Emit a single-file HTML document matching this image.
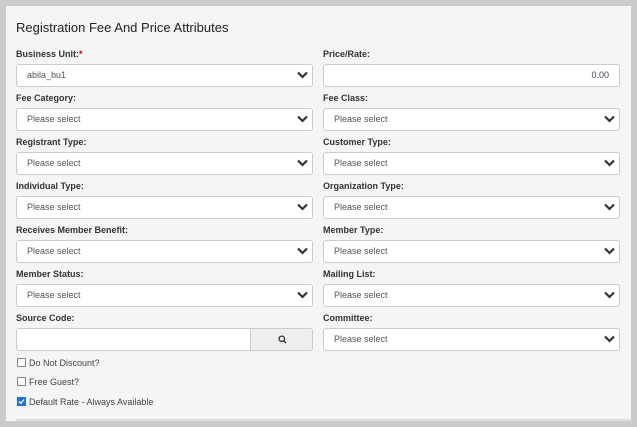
<html><head><style>
body{margin:0;width:637px;height:427px;background:#cbcbcb;font-family:"Liberation Sans",sans-serif;overflow:hidden;position:relative}
.p{position:absolute;left:6px;top:6px;width:625px;height:415px;background:#f5f5f5}
.t{position:absolute;left:16px;top:20px;font-size:13px;color:#222}
.l{position:absolute;font-size:9px;font-weight:bold;color:#333}
.s{position:absolute;width:295px;height:21px;background:#fff;border:1px solid #ccc;border-radius:3px;font-size:9px;color:#555;line-height:21px;text-indent:10px}
.s svg{position:absolute;right:4px;top:6px}
.c{position:absolute;left:17px;font-size:9px;color:#444;line-height:10px}
.c i{display:inline-block;width:7px;height:7px;border:1px solid #888;vertical-align:-1px;margin-right:3px;background:#fff}
</style></head><body>
<div class="p"></div>
<div class="t">Registration Fee And Price Attributes</div>
<div class="l" style="left:16px;top:49px">Business Unit:<span style="color:#c00">*</span></div>
<div class="s" style="left:16px;top:64px">abila_bu1<svg width="11" height="8" viewBox="0 0 11 8"><path d="M1 1.5l4.5 4.5 4.5-4.5" stroke="#333" stroke-width="2.2" fill="none"/></svg></div>
<div class="l" style="left:323px;top:49px">Price/Rate:</div>
<div class="s" style="left:323px;top:64px;text-align:right;padding-right:0"><span style="position:absolute;right:10px;color:#445">0.00</span></div>

<div class="l" style="left:16px;top:93px">Fee Category:</div>
<div class="s" style="left:16px;top:108px">Please select<svg width="11" height="8" viewBox="0 0 11 8"><path d="M1 1.5l4.5 4.5 4.5-4.5" stroke="#333" stroke-width="2.2" fill="none"/></svg></div>
<div class="l" style="left:323px;top:93px">Fee Class:</div>
<div class="s" style="left:323px;top:108px">Please select<svg width="11" height="8" viewBox="0 0 11 8"><path d="M1 1.5l4.5 4.5 4.5-4.5" stroke="#333" stroke-width="2.2" fill="none"/></svg></div>

<div class="l" style="left:16px;top:137px">Registrant Type:</div>
<div class="s" style="left:16px;top:152px">Please select<svg width="11" height="8" viewBox="0 0 11 8"><path d="M1 1.5l4.5 4.5 4.5-4.5" stroke="#333" stroke-width="2.2" fill="none"/></svg></div>
<div class="l" style="left:323px;top:137px">Customer Type:</div>
<div class="s" style="left:323px;top:152px">Please select<svg width="11" height="8" viewBox="0 0 11 8"><path d="M1 1.5l4.5 4.5 4.5-4.5" stroke="#333" stroke-width="2.2" fill="none"/></svg></div>

<div class="l" style="left:16px;top:181px">Individual Type:</div>
<div class="s" style="left:16px;top:196px">Please select<svg width="11" height="8" viewBox="0 0 11 8"><path d="M1 1.5l4.5 4.5 4.5-4.5" stroke="#333" stroke-width="2.2" fill="none"/></svg></div>
<div class="l" style="left:323px;top:181px">Organization Type:</div>
<div class="s" style="left:323px;top:196px">Please select<svg width="11" height="8" viewBox="0 0 11 8"><path d="M1 1.5l4.5 4.5 4.5-4.5" stroke="#333" stroke-width="2.2" fill="none"/></svg></div>

<div class="l" style="left:16px;top:225px">Receives Member Benefit:</div>
<div class="s" style="left:16px;top:240px">Please select<svg width="11" height="8" viewBox="0 0 11 8"><path d="M1 1.5l4.5 4.5 4.5-4.5" stroke="#333" stroke-width="2.2" fill="none"/></svg></div>
<div class="l" style="left:323px;top:225px">Member Type:</div>
<div class="s" style="left:323px;top:240px">Please select<svg width="11" height="8" viewBox="0 0 11 8"><path d="M1 1.5l4.5 4.5 4.5-4.5" stroke="#333" stroke-width="2.2" fill="none"/></svg></div>

<div class="l" style="left:16px;top:269px">Member Status:</div>
<div class="s" style="left:16px;top:284px">Please select<svg width="11" height="8" viewBox="0 0 11 8"><path d="M1 1.5l4.5 4.5 4.5-4.5" stroke="#333" stroke-width="2.2" fill="none"/></svg></div>
<div class="l" style="left:323px;top:269px">Mailing List:</div>
<div class="s" style="left:323px;top:284px">Please select<svg width="11" height="8" viewBox="0 0 11 8"><path d="M1 1.5l4.5 4.5 4.5-4.5" stroke="#333" stroke-width="2.2" fill="none"/></svg></div>

<div class="l" style="left:16px;top:313px">Source Code:</div>
<div class="s" style="left:16px;top:328px;overflow:hidden"><div style="position:absolute;left:233px;top:0;width:63px;height:21px;background:#eee;border-left:1px solid #ccc"><svg width="9" height="9" viewBox="0 0 9 9" style="left:27px;top:6px;right:auto"><circle cx="3.8" cy="3.8" r="2.7" stroke="#333" stroke-width="1.3" fill="none"/><path d="M5.8 5.8L8 8" stroke="#333" stroke-width="1.5"/></svg></div></div>
<div class="l" style="left:323px;top:313px">Committee:</div>
<div class="s" style="left:323px;top:328px">Please select<svg width="11" height="8" viewBox="0 0 11 8"><path d="M1 1.5l4.5 4.5 4.5-4.5" stroke="#333" stroke-width="2.2" fill="none"/></svg></div>

<div class="c" style="top:358px"><i></i>Do Not Discount?</div>
<div class="c" style="top:377px"><i></i>Free Guest?</div>
<div class="c" style="top:397px"><i style="background:#1a73e8;border-color:#1a73e8;position:relative"><svg width="7" height="7" viewBox="0 0 7 7" style="position:absolute;left:0;top:0"><path d="M1 3.5l1.8 1.8L6 1.5" stroke="#fff" stroke-width="1.3" fill="none"/></svg></i>Default Rate - Always Available</div>
<div style="position:absolute;left:16px;top:419px;width:615px;height:2px;background:#ddd"></div>
</body></html>
